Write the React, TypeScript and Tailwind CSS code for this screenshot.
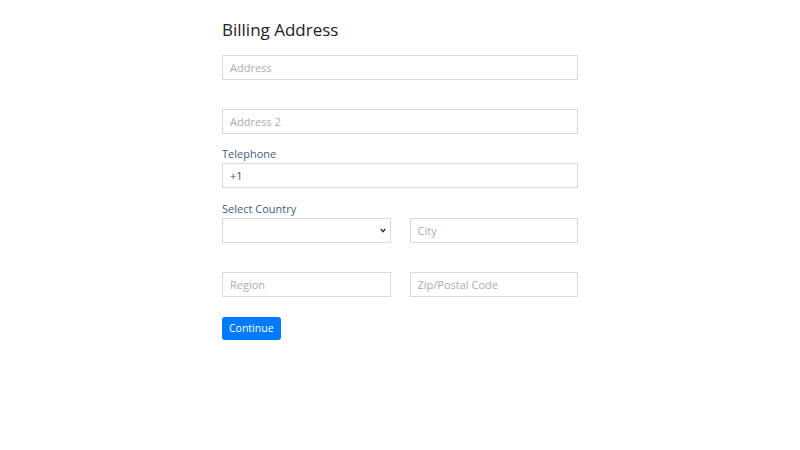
import React from "react";

const inputCls =
  "block w-full h-[25px] px-[7px] border border-[#d7dade] bg-white text-[11px] text-[#495057] placeholder:text-[#a9adb2] outline-none";

const Label: React.FC<{ children?: React.ReactNode }> = ({ children }) => (
  <label className="block h-[14px] mb-[2px] text-[11px] leading-[14px] text-[#485c82]">
    {children}
  </label>
);

const App: React.FC = () => {
  return (
    <div className="min-h-[450px] bg-white font-['Open_Sans',sans-serif]">
      <div className="mx-auto w-[356px] pt-[18px]">
        {/* Header */}
        <h1 className="text-[17px] leading-[24px] text-[#222] mb-[13px]">
          Billing Address
        </h1>

        {/* Address */}
        <input className={inputCls} placeholder="Address" />

        <div className="mt-[13px]">
          <Label />
          <input className={inputCls} placeholder="Address 2" />
        </div>

        <div className="mt-[13px]">
          <Label>Telephone</Label>
          <input className={inputCls} defaultValue="+1" />
        </div>

        <div className="mt-[14px] grid grid-cols-2 gap-x-[19px]">
          <div>
            <Label>Select Country</Label>
            <div className="relative">
              <select
                className={inputCls + " appearance-none pr-[16px]"}
                defaultValue=""
              >
                <option value=""></option>
              </select>
              <svg
                className="pointer-events-none absolute right-[5px] top-[10px]"
                width="6"
                height="5"
                viewBox="0 0 6 5"
              >
                <path
                  d="M0.8 1 L3 3.6 L5.2 1"
                  fill="none"
                  stroke="#333"
                  strokeWidth="1.4"
                />
              </svg>
            </div>
          </div>
          <div>
            <Label />
            <input className={inputCls} placeholder="City" />
          </div>
        </div>

        <div className="mt-[13px] grid grid-cols-2 gap-x-[19px]">
          <div>
            <Label />
            <input className={inputCls} placeholder="Region" />
          </div>
          <div>
            <Label />
            <input className={inputCls} placeholder="Zip/Postal Code" />
          </div>
        </div>

        <button className="mt-[20px] h-[23px] px-[7px] rounded-[3px] bg-[#007bff] text-white text-[10.5px]">
          Continue
        </button>
      </div>
    </div>
  );
};

export default App;
